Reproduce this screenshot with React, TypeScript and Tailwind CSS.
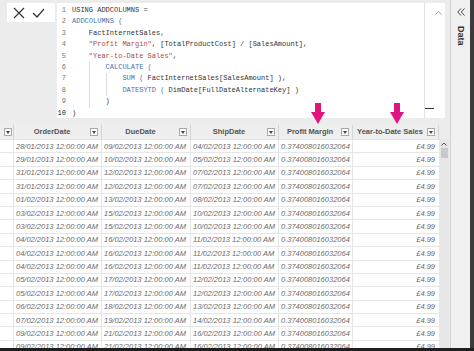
import React from 'react';

type Seg = { t: string; c?: string };
type CodeLine = { guides: number[]; indent: number; segs: Seg[] };

const BLUE = 'text-[#4a6fae]';
const RED = 'text-[#b24a3c]';

const codeLines: CodeLine[] = [
    { guides: [], indent: 0, segs: [{ t: 'USING ADDCOLUMNS =' }] },
    { guides: [], indent: 0, segs: [{ t: 'ADDCOLUMNS (', c: BLUE }] },
    { guides: [], indent: 1, segs: [{ t: 'FactInternetSales,' }] },
    { guides: [], indent: 1, segs: [{ t: '"Profit Margin"', c: RED }, { t: ', [TotalProductCost] / [SalesAmount],' }] },
    { guides: [], indent: 1, segs: [{ t: '"Year-to-Date Sales"', c: RED }, { t: ',' }] },
    { guides: [1], indent: 2, segs: [{ t: 'CALCULATE (', c: BLUE }] },
    { guides: [1, 2], indent: 3, segs: [{ t: 'SUM (', c: BLUE }, { t: ' FactInternetSales[SalesAmount] ),' }] },
    { guides: [1, 2], indent: 3, segs: [{ t: 'DATESYTD (', c: BLUE }, { t: ' DimDate[FullDateAlternateKey] )' }] },
    { guides: [1], indent: 2, segs: [{ t: ')' }] },
    { guides: [], indent: 0, segs: [{ t: ')' }] },
];

const dates: [string, string, string][] = [
    ['28/01/2013', '09/02/2013', '04/02/2013'],
    ['29/01/2013', '10/02/2013', '05/02/2013'],
    ['31/01/2013', '12/02/2013', '07/02/2013'],
    ['31/01/2013', '12/02/2013', '07/02/2013'],
    ['01/02/2013', '13/02/2013', '08/02/2013'],
    ['03/02/2013', '15/02/2013', '10/02/2013'],
    ['03/02/2013', '15/02/2013', '10/02/2013'],
    ['04/02/2013', '16/02/2013', '11/02/2013'],
    ['04/02/2013', '16/02/2013', '11/02/2013'],
    ['04/02/2013', '16/02/2013', '11/02/2013'],
    ['05/02/2013', '17/02/2013', '12/02/2013'],
    ['05/02/2013', '17/02/2013', '12/02/2013'],
    ['06/02/2013', '18/02/2013', '13/02/2013'],
    ['07/02/2013', '19/02/2013', '14/02/2013'],
    ['09/02/2013', '21/02/2013', '16/02/2013'],
    ['09/02/2013', '21/02/2013', '16/02/2013'],
];

const columns = [
    { name: 'OrderDate', w: 'w-[88px]' },
    { name: 'DueDate', w: 'w-[89px]' },
    { name: 'ShipDate', w: 'w-[88px]' },
    { name: 'Profit Margin', w: 'w-[74px]' },
    { name: 'Year-to-Date Sales', w: 'w-[86px]' },
];

const Dropdown = () => (
    <div className="w-[8px] h-[8px] border border-[#a9a9a9] bg-white flex items-center justify-center shrink-0">
        <svg width="4" height="3" viewBox="0 0 4 3">
            <polygon points="0,0 4,0 2,3" fill="#444" />
        </svg>
    </div>
);

const Arrow = ({ left }: { left: string }) => (
    <svg className={`absolute top-[103px] ${left}`} width="14" height="21" viewBox="0 0 14 21">
        <rect x="4" y="0" width="6" height="10" fill="#e0157f" />
        <polygon points="0,9 14,9 7,21" fill="#e0157f" />
    </svg>
);

const cellText = "text-[7.5px] italic text-[#6a6a6a] whitespace-nowrap overflow-hidden";

export default function App() {
    return (
        <div className="w-[474px] h-[351px] flex flex-col overflow-hidden bg-[#ececec] font-['Liberation_Sans',Arial,sans-serif]">
            <div className="flex-1 min-h-0 flex">
                <div className="w-[450px] flex flex-col relative">
                    {/* formula bar */}
                    <div className="h-[125px] pt-[3px] flex items-start shrink-0">
                        <div className="ml-[7px] w-[48px] h-[19px] bg-white">
                            <svg width="48" height="19" viewBox="0 0 48 19">
                                <path d="M7 5 L17 15 M17 5 L7 15" stroke="#333" strokeWidth="1.2" fill="none" />
                                <path d="M26 10 L30 14 L37 6" stroke="#333" strokeWidth="1.2" fill="none" />
                            </svg>
                        </div>
                        <div className="ml-[2px] w-[388px] h-[115px] bg-white flex">
                            <div className="w-[367px] pt-[2px] font-['Liberation_Mono','DejaVu_Sans_Mono',monospace] text-[7px] text-[#333]">
                                {codeLines.map((line, i) => (
                                    <div key={i} className="flex h-[11.4px] leading-[11.4px] whitespace-pre">
                                        <span className={`w-[9px] text-right ${i === 9 ? 'text-[#222]' : 'text-[#777]'}`}>{i + 1}</span>
                                        <span className="ml-[6px] flex">
                                            {Array.from({ length: line.indent }).map((_, k) => (
                                                <span
                                                    key={k}
                                                    className={`inline-block w-[16.8px] h-full ${line.guides.includes(k) ? 'border-l border-[#dcdcdc]' : ''}`}
                                                />
                                            ))}
                                            {line.segs.map((s, k) => (
                                                <span key={k} className={s.c || ''}>{s.t}</span>
                                            ))}
                                        </span>
                                    </div>
                                ))}
                            </div>
                            <div className="w-[21px] border-l border-[#e2e2e2] flex flex-col relative">
                                <svg className="mt-[8px] ml-[10px]" width="7" height="4" viewBox="0 0 7 4">
                                    <path d="M0.5 3.5 L3.5 0.5 L6.5 3.5" stroke="#9a9a9a" strokeWidth="1" fill="none" />
                                </svg>
                                <div className="mt-auto mb-[9px] w-[9px] h-[1.5px] bg-[#333]" />
                            </div>
                        </div>
                    </div>

                    {/* table */}
                    <div className="flex-1 min-h-0 flex">
                        <div className="w-[439px] overflow-hidden flex flex-col">
                            <div className="flex h-[14px] shrink-0 bg-[#eeeeee]">
                                <div className="w-[14px] flex items-center pl-[4px] border-r border-[#d5d5d5]">
                                    <Dropdown />
                                </div>
                                {columns.map(col => (
                                    <div key={col.name} className={`${col.w} flex items-center border-r border-[#d5d5d5] pr-[3px]`}>
                                        <span className="flex-1 text-center text-[7.5px] font-bold text-[#555] whitespace-nowrap">{col.name}</span>
                                        <Dropdown />
                                    </div>
                                ))}
                            </div>
                            {dates.map((d, i) => (
                                <div key={i} className="flex h-[13.4px] shrink-0 bg-white border-t border-[#e6e6e6]">
                                    <div className="w-[14px] border-r border-[#e6e6e6]" />
                                    {d.map((v, k) => (
                                        <div key={k} className={`${columns[k].w} border-r border-[#e6e6e6] pl-[2px] flex items-center ${cellText}`}>
                                            {v} 12:00:00 AM
                                        </div>
                                    ))}
                                    <div className={`w-[74px] border-r border-[#e6e6e6] pl-[2px] flex items-center ${cellText}`}>
                                        0.374008016032064
                                    </div>
                                    <div className={`w-[86px] pr-[4px] flex items-center justify-end ${cellText}`}>
                                        £4.99
                                    </div>
                                </div>
                            ))}
                        </div>
                        <div className="w-[10px] flex flex-col">
                            <div className="h-[14px] shrink-0" />
                            <div className="flex-1 bg-[#e6e6e6] flex flex-col items-center">
                                <svg className="mt-[3px]" width="6" height="4" viewBox="0 0 6 4">
                                    <path d="M0.5 3.5 L3 1 L5.5 3.5" stroke="#555" strokeWidth="1" fill="none" />
                                </svg>
                                <div className="mt-[2px] w-[7px] h-[10px] bg-[#c9c9c9]" />
                            </div>
                        </div>
                    </div>

                    <Arrow left="left-[311px]" />
                    <Arrow left="left-[390px]" />
                </div>

                {/* data pane */}
                <div className="w-[20px] border-l border-[#d2d2d2] bg-[#f0f0f0] flex flex-col items-center">
                    <svg className="mt-[8px]" width="8" height="8" viewBox="0 0 8 8">
                        <path d="M4 0.5 L0.8 4 L4 7.5 M7.5 0.5 L4.3 4 L7.5 7.5" stroke="#444" strokeWidth="1" fill="none" />
                    </svg>
                    <span className="mt-[10px] [writing-mode:vertical-rl] text-[9px] font-bold text-[#333] leading-none">Data</span>
                </div>
                <div className="w-[4px] bg-[#3b3b3b]" />
            </div>
            <div className="h-[3.5px] bg-[#1f1f1f] shrink-0" />
        </div>
    );
}
